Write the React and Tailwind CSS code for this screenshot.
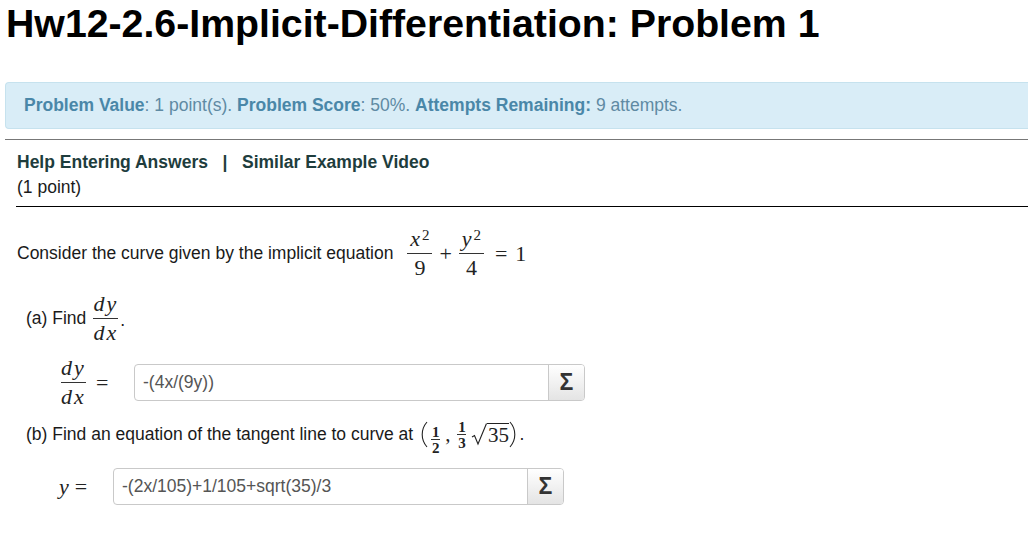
function Frac({ top, bottom, w = "w-[25px]" }) {
  return (
    <span className="inline-flex flex-col items-center font-['Liberation_Serif',serif] leading-none text-[22px] gap-[3px] text-[#222]">
      <span className="h-[22px] flex items-end">{top}</span>
      <span className={`${w} h-px bg-[#333]`}></span>
      <span className="h-[22px] flex items-start">{bottom}</span>
    </span>
  );
}

function Squared({ v }) {
  return (
    <span className="italic">
      {v}
      <sup className="not-italic text-[15px] leading-none relative -top-[6px] ml-[2px] align-baseline">2</sup>
    </span>
  );
}

function Dydx() {
  return <Frac top={<i className="tracking-[2px]">dy</i>} bottom={<i className="tracking-[2px]">dx</i>} />;
}

function SmallFrac({ bottom }) {
  return (
    <span className="inline-flex flex-col items-center font-['Liberation_Serif',serif] text-[15px] font-semibold leading-none">
      <span className="h-[14px]">1</span>
      <span className="w-[9px] h-px bg-[#333]"></span>
      <span className="h-[14px] pt-[1px]">{bottom}</span>
    </span>
  );
}

function Paren({ flip }) {
  return (
    <svg width="7" height="27" viewBox="0 0 7 27" className={flip ? "-scale-x-100" : ""}>
      <path d="M6 1C2.5 5 1.2 9 1.2 13.5S2.5 22 6 26" fill="none" stroke="#222" strokeWidth="1.1" />
    </svg>
  );
}

function SqrtSign() {
  return (
    <svg width="16" height="24" viewBox="0 0 16 24" className="-mb-[1px]">
      <path d="M1 14l2.5-1.5L7 21 15.5 .5" fill="none" stroke="#222" strokeWidth="1.1" />
    </svg>
  );
}

function AnswerInput({ value }) {
  return (
    <div className="flex w-[451px] h-[37px] border border-[#c9c9c9] rounded-[4px] bg-white overflow-hidden">
      <div className="flex-1 pl-[8px] flex items-center text-[17.5px] text-[#555]">{value}</div>
      <div className="w-[36px] border-l border-[#c9c9c9] bg-gradient-to-b from-white to-[#e4e4e4] flex items-center justify-center text-[23px] font-bold text-[#333]">
        Σ
      </div>
    </div>
  );
}

export default function App() {
  return (
    <div className="w-[1028px] h-[540px] overflow-hidden bg-white font-['Liberation_Sans',Arial,sans-serif] text-[17.5px] text-[#1a1a1a]">
      <h1 className="pl-[6px] pt-[3px] h-[82px] text-[39.25px] leading-[40px] font-bold text-black">
        Hw12-2.6-Implicit-Differentiation: Problem 1
      </h1>

      <div className="ml-[5px] h-[47px] flex items-center pl-[18px] bg-[#d9edf7] border border-r-0 border-[#c6e2ee] rounded-l-[4px] text-[#5f8aa3]">
        <p>
          <b className="text-[#4a87a8]">Problem Value</b>: 1 point(s). <b className="text-[#4a87a8]">Problem Score</b>: 50%.{" "}
          <b className="text-[#4a87a8]">Attempts Remaining:</b> 9 attempts.
        </p>
      </div>

      <div className="ml-[5px] mt-[10px] h-px bg-[#777]"></div>

      <div className="ml-[17px] mt-[10px] h-[25px] leading-[25px] font-bold text-[#1e3d3d] whitespace-pre">
        Help Entering Answers   |   Similar Example Video
      </div>
      <div className="ml-[17px] h-[25px] leading-[25px]">(1 point)</div>
      <div className="ml-[16px] mt-[6px] h-px bg-black"></div>

      <div className="ml-[17px] mt-[19px] h-[54px] flex items-center">
        <span>Consider the curve given by the implicit equation</span>
        <span className="ml-[14px] flex items-center text-[22px] font-['Liberation_Serif',serif] text-[#222]">
          <Frac top={<Squared v="x" />} bottom="9" />
          <span className="mx-[7px]">+</span>
          <Frac top={<Squared v="y" />} bottom="4" />
          <span className="ml-[11px]">=</span>
          <span className="ml-[8px]">1</span>
        </span>
      </div>

      <div className="ml-[26px] mt-[13px] h-[50px] flex items-center">
        <span>(a) Find</span>
        <span className="ml-[7px] flex items-center">
          <Dydx />
        </span>
        <span className="self-end mb-[10px] ml-[2px]">.</span>
      </div>

      <div className="ml-[61px] mt-[14px] h-[50px] flex items-center">
        <span className="w-[73px] flex items-center shrink-0">
          <Dydx />
          <span className="ml-[10px] text-[22px] font-['Liberation_Serif',serif] text-[#222]">=</span>
        </span>
        <AnswerInput value="-(4x/(9y))" />
      </div>

      <div className="ml-[26px] mt-[10px] h-[34px] flex items-center">
        <span>(b) Find an equation of the tangent line to curve at</span>
        <span className="ml-[8px] flex items-center font-['Liberation_Serif',serif] text-[21px] text-[#222]">
          <Paren />
          <span className="ml-[3px]">
            <SmallFrac bottom="2" />
          </span>
          <span className="ml-[5px] mr-[7px] leading-none">,</span>
          <SmallFrac bottom="3" />
          <span className="ml-[5px]">
            <SqrtSign />
          </span>
          <span className="border-t border-[#222] leading-[22px] w-[22px] text-center">35</span>
          <Paren flip />
        </span>
        <span className="ml-[3px]">.</span>
      </div>

      <div className="ml-[59px] mt-[17px] h-[37px] flex items-center">
        <span className="w-[54px] shrink-0 text-[22px] font-['Liberation_Serif',serif] text-[#222]">
          <i>y</i>
          <span className="ml-[6px]">=</span>
        </span>
        <AnswerInput value="-(2x/105)+1/105+sqrt(35)/3" />
      </div>
    </div>
  );
}
